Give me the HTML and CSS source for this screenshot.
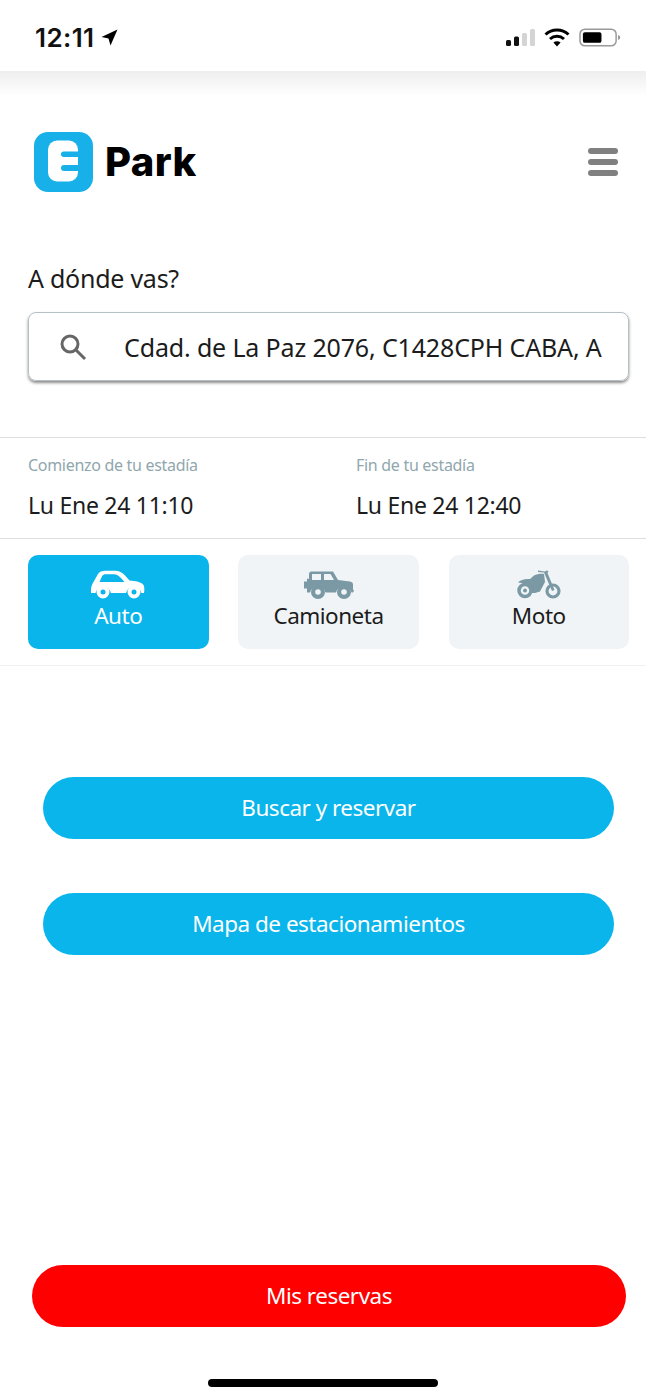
FILE: index.html
```html
<!DOCTYPE html>
<html lang="es">
<head>
  <meta charset="UTF-8">
  <meta name="viewport" content="width=device-width, initial-scale=1.0">
  <title>EPark</title>
  <link rel="stylesheet" href="styles.css">
</head>
<body>
  <div class="status-bar">
    <div class="clock">
      <span>12:11</span>
      <svg class="arrow" width="17" height="17" viewBox="0 0 17 17"><path d="M16.5.5.5 8l7 1.500 2 7z"/></svg>
    </div>
    <div class="status-icons">
      <svg width="30" height="18" viewBox="0 0 30 18">
        <rect x="1" y="11" width="5" height="6" rx="1.5" fill="#111"/>
        <rect x="9" y="7.5" width="5" height="9.5" rx="1.5" fill="#111"/>
        <rect x="17" y="4" width="5" height="13" rx="1.5" fill="#d4d4d4"/>
        <rect x="25" y="0" width="5" height="17" rx="1.5" fill="#d4d4d4"/>
      </svg>
      <svg width="26" height="19" viewBox="0 0 26 19">
        <path d="M1.500 6.500C8 .6 18 .6 24.500 6.500" fill="none" stroke="#000" stroke-width="3"/>
        <path d="M6 11c4-3.600 10-3.600 14 0" fill="none" stroke="#000" stroke-width="3"/>
        <path d="M9.400 14.400c2-1.700 5.200-1.700 7.200 0L13 18.500z" fill="#000"/>
      </svg>
      <svg width="42" height="19" viewBox="0 0 43 19">
        <rect x="1" y="1" width="37" height="17" rx="5" fill="none" stroke="#999" stroke-width="1.500"/>
        <rect x="4" y="4" width="19" height="11" rx="2" fill="#000"/>
        <path d="M40 7c1.500.4 2.200 1.300 2.200 2.500S41.500 11.600 40 12z" fill="#999"/>
      </svg>
    </div>
  </div>
  <div class="page">
    <div class="header">
      <div class="brand">
        <svg class="logo" width="59" height="60" viewBox="0 0 59 60">
          <rect width="59" height="60" rx="14" fill="#18b0e8"/>
          <rect x="14" y="8.500" width="30" height="41" rx="9" fill="#fff"/>
          <rect x="27" y="19.500" width="20" height="5.500" rx="2.700" fill="#18b0e8"/>
          <rect x="27" y="33" width="20" height="6" rx="3" fill="#18b0e8"/>
        </svg>
        <span class="brand-name">Park</span>
      </div>
      <div class="menu"><i></i><i></i><i></i></div>
    </div>

    <div class="search">
      <div class="search-title">A dónde vas?</div>
      <div class="search-box">
        <svg class="search-icon" width="28" height="28" viewBox="0 0 28 28" fill="none" stroke="#666" stroke-width="3">
          <circle cx="11" cy="11" r="8"/>
          <path d="M17 17l9 9"/>
        </svg>
        <div class="search-text">Cdad. de La Paz 2076, C1428CPH CABA, A</div>
      </div>
    </div>

    <div class="dates">
      <div class="date-col">
        <div class="date-label">Comienzo de tu estadía</div>
        <div class="date-value">Lu Ene 24 11:10</div>
      </div>
      <div class="date-col">
        <div class="date-label">Fin de tu estadía</div>
        <div class="date-value">Lu Ene 24 12:40</div>
      </div>
    </div>

    <div class="vehicles">
      <div class="vehicle active">
        <!-- car -->
        <svg width="54" height="30" viewBox="0 0 54 30">
          <path fill-rule="evenodd" d="M0 24c-.500-4 .500-8 2.500-11L7 5C8.500 3 11 1.800 14 1.800h10c4 0 7.500 2 10 4.700l4.500 5c6 .5 12 1.500 14 4.500 1 1.500 1 5 .500 8H50.500a8 8 0 0 0-15.500 0H20a8 8 0 0 0-15.500 0zM8.500 13H33.500l-3.500-4c-2.500-2.500-4-3.800-7.500-3.800H15c-2 0-3 .500-4 2z"/>
          <path fill-rule="evenodd" d="M12 16.500a6.500 6.500 0 1 1 0 13 6.500 6.500 0 0 1 0-13zm0 4a2.500 2.500 0 1 0 0 5 2.500 2.500 0 0 0 0-5zM43 16.500a6.500 6.500 0 1 1 0 13 6.500 6.500 0 0 1 0-13zm0 4a2.500 2.500 0 1 0 0 5 2.500 2.500 0 0 0 0-5z"/>
        </svg>
        <span>Auto</span>
      </div>
      <div class="vehicle">
        <!-- jeep with spare wheel on the back -->
        <svg width="50" height="30" viewBox="0 0 50 30">
          <path fill-rule="evenodd" d="M5 10V5c0-1.500 1-2.500 2.500-2.500H29l5 8.500 12 1.500c2 .3 3 1.500 3 3v5l1 1-1 2h-1.500a8 8 0 0 0-15.500 0H21.500a8 8 0 0 0-15.500 0H3v-4H0v-7h3v-3zM8 5v6h9V5zm12 0v6h10l-3.500-6z"/>
          <path fill-rule="evenodd" d="M14 16a7 7 0 1 1 0 14 7 7 0 0 1 0-14zm0 4.200a2.800 2.800 0 1 0 0 5.600 2.800 2.800 0 0 0 0-5.600zM40 16a7 7 0 1 1 0 14 7 7 0 0 1 0-14zm0 4.200a2.800 2.800 0 1 0 0 5.600 2.800 2.800 0 0 0 0-5.600z"/>
        </svg>
        <span>Camioneta</span>
      </div>
      <div class="vehicle">
        <!-- motorbike -->
        <svg width="44" height="30" viewBox="0 0 44 30">
          <path d="M1 13.500C3 11 8 9.500 13 10l4-3.500C20 5 24 4.500 27 5l1 8-5 9.500-5 1.500h-3c0-5-4-9.500-14-10.500z"/>
          <path d="M21 1.500l7 1 1.500-1 2 .5-1 2 7 17-2.500 1-8-18.500-6-.5z"/>
          <circle cx="8" cy="21.500" r="6" fill="none" stroke="currentColor" stroke-width="3.500"/>
          <circle cx="8" cy="21.500" r="2"/>
          <circle cx="36" cy="22" r="6" fill="none" stroke="currentColor" stroke-width="3.200"/>
        </svg>
        <span>Moto</span>
      </div>
    </div>

    <div class="actions">
      <div class="btn">Buscar y reservar</div>
      <div class="btn">Mapa de estacionamientos</div>
    </div>

    <div class="footer">
      <div class="btn btn-red">Mis reservas</div>
      <div class="home-bar"></div>
    </div>
  </div>
</body>
</html>
```

FILE: styles.css
```css
* {
  box-sizing: border-box;
}
html,
body {
  margin: 0;
  height: 100%;
}
body {
  display: flex;
  flex-direction: column;
  height: 1400px;
  overflow: hidden;
  background-color: #fff;
  color: #1c1c1c;
  font-family: "Noto Sans", sans-serif;
}

/* status bar */
.status-bar {
  display: flex;
  justify-content: space-between;
  align-items: center;
  flex: none;
  height: 71px;
  padding: 4px 25px 0 35px;
}
.clock {
  display: flex;
  align-items: center;
  gap: 7px;
  font-family: "Inter", sans-serif;
  font-size: 26px;
  font-weight: 600;
  letter-spacing: .4px;
  color: #111;
}
.status-icons {
  display: flex;
  align-items: center;
  gap: 9px;
}

/* page */
.page {
  display: flex;
  flex-direction: column;
  flex: 1;
  background: linear-gradient(#eeeeee, #fff 25px);
}
.header {
  display: flex;
  justify-content: space-between;
  align-items: center;
  padding: 61px 28px 0 34px;
}
.brand {
  display: flex;
  align-items: center;
  gap: 12px;
}
.brand-name {
  padding-bottom: 2px;
  font-family: "Inter", sans-serif;
  font-size: 40px;
  font-weight: 800;
  letter-spacing: .4px;
  color: #000;
}
.menu {
  display: flex;
  flex-direction: column;
  gap: 5px;
  width: 30px;
}
.menu i {
  height: 6px;
  border-radius: 3px;
  background-color: #808080;
}

/* search */
.search {
  padding: 69px 17px 0 28px;
}
.search-title {
  height: 34px;
  line-height: 34px;
  font-size: 25px;
  letter-spacing: -.25px;
}
.search-box {
  display: flex;
  align-items: center;
  height: 69px;
  margin-top: 17px;
  padding: 0 26px 0 30px;
  border: 1px solid #b4c0c6;
  border-radius: 8px;
  box-shadow: 0 2px 3px rgba(0, 0, 0, .45);
}
.search-icon {
  flex: none;
  margin-right: 37px;
}
.search-text {
  overflow: hidden;
  white-space: nowrap;
  font-size: 25px;
  letter-spacing: -.15px;
}

/* dates */
.dates {
  display: grid;
  grid-template-columns: 328px 1fr;
  height: 102px;
  margin-top: 56px;
  padding: 16px 0 0 28px;
  border-top: 1px solid #dedede;
  border-bottom: 1px solid #dedede;
}
.date-label {
  font-size: 16px;
  line-height: 22px;
  letter-spacing: -.3px;
  color: #8fa7ad;
}
.date-value {
  margin-top: 14px;
  font-size: 23px;
  line-height: 30px;
  letter-spacing: -.27px;
}

/* vehicle type */
.vehicles {
  display: grid;
  grid-template-columns: repeat(3, 180.5px);
  justify-content: space-between;
  height: 127px;
  padding: 16px 17px 16px 28px;
  border-bottom: 1px solid #f0f0f0;
}
.vehicle {
  display: flex;
  flex-direction: column;
  align-items: center;
  padding-top: 14px;
  border-radius: 10px;
  background-color: #f0f4f7;
  color: #7a99a4;
}
.vehicle svg {
  display: block;
  fill: currentColor;
}
.vehicle span {
  margin-top: 2px;
  font-size: 22.5px;
  line-height: 30px;
  letter-spacing: -.5px;
  color: #1c1c1c;
}
.vehicle.active {
  background-color: #09b5ea;
  color: #fff;
}
.vehicle.active span {
  color: #fff;
}

/* buttons */
.actions {
  display: flex;
  flex-direction: column;
  gap: 54px;
  padding: 111px 32px 0 43px;
}
.btn {
  height: 62px;
  line-height: 62px;
  border-radius: 31px;
  text-align: center;
  font-size: 22.5px;
  letter-spacing: -.5px;
  color: #fff;
  background-color: #09b5ea;
}
.footer {
  display: flex;
  flex-direction: column;
  margin-top: auto;
  padding: 0 20px 13px 32px;
}
.btn-red {
  background-color: #fe0000;
}
.home-bar {
  width: 230px;
  height: 8px;
  margin: 52px 0 0 176px;
  border-radius: 4px;
  background-color: #000;
}
```
